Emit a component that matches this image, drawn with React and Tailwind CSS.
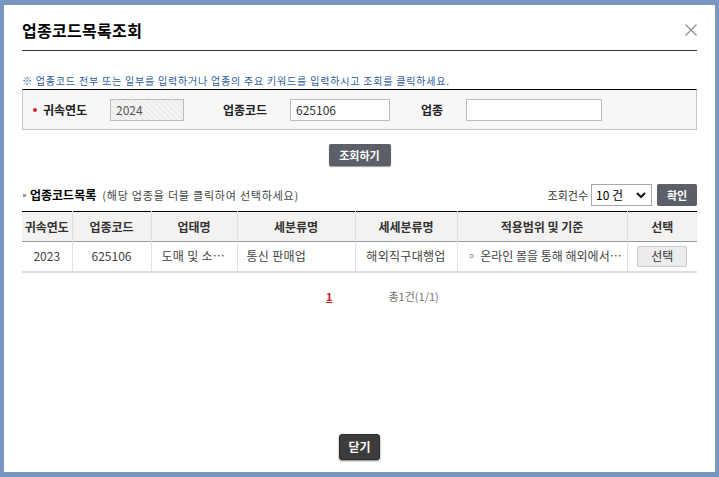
import React from 'react';

const font = { fontFamily: '"Noto Sans CJK KR", "Noto Sans", sans-serif' };

const columns = [
  { label: '귀속연도', w: 'w-[50px]' },
  { label: '업종코드', w: 'w-[79px]' },
  { label: '업태명', w: 'w-[86px]' },
  { label: '세분류명', w: 'w-[118px]' },
  { label: '세세분류명', w: 'w-[102px]' },
  { label: '적용범위 및 기준', w: 'w-[170px]' },
  { label: '선택', w: 'w-[70px]' },
];

export default function App() {
  return (
    <div className="min-h-[477px] w-[719px] bg-[#7896c0] pt-[5px] pl-[4px]" style={font}>
      <div className="w-[711px] h-[467px] bg-white flex flex-col px-[18px] text-[#333]">
        {/* HEADER */}
        <div className="h-[46px] flex items-center justify-between border-b border-[#333] shrink-0">
          <h1 className="text-[16px] font-bold text-black tracking-[0.3px] pt-[4px]">업종코드목록조회</h1>
          <svg width="12" height="12" viewBox="0 0 12 12" className="mt-[4px]">
            <path d="M0.5 0.5 L11.5 11.5 M11.5 0.5 L0.5 11.5" stroke="#8a8f9a" strokeWidth="1.2" fill="none" />
          </svg>
        </div>

        <p className="mt-[23px] text-[10px] leading-[13px] text-[#2b5ea0] tracking-[0.8px]">
          ※ 업종코드 전부 또는 일부를 입력하거나 업종의 주요 키워드를 입력하시고 조회를 클릭하세요.
        </p>

        {/* SEARCH BOX */}
        <div className="mt-[2px] h-[41px] border border-[#c6c6c6] border-t-black bg-[#f7f7f7] flex items-center pl-[10px] text-[12px]">
          <span className="w-[4px] h-[4px] rounded-full bg-[#d42a2a] mr-[6px]" />
          <span className="w-[67px] font-bold text-[#222]">귀속연도</span>
          <div className="w-[74px] h-[22px] border border-[#bcbcbc] flex items-center px-[5px] text-[#555] bg-[repeating-linear-gradient(45deg,#f4f4f4_0px,#f4f4f4_2px,#e6e6e6_3px,#f4f4f4_4px)]">2024</div>
          <span className="ml-[39px] w-[67px] font-bold text-[#222]">업종코드</span>
          <div className="w-[100px] h-[22px] border border-[#bcbcbc] bg-white flex items-center px-[5px] text-[#333]">625106</div>
          <span className="ml-[31px] w-[45px] font-bold text-[#222]">업종</span>
          <div className="w-[136px] h-[22px] border border-[#bcbcbc] bg-white" />
        </div>

        <div className="mt-[14px] flex justify-center">
          <button className="w-[62px] h-[22px] rounded-[2px] bg-[#5b5f67] text-white text-[11px] font-bold shadow-[0_1px_1px_rgba(0,0,0,0.4)]">조회하기</button>
        </div>

        {/* LIST HEADER */}
        <div className="mt-[18px] h-[22px] flex items-center justify-between">
          <div className="flex items-center text-[11px]">
            <span className="w-[3px] h-[3px] bg-[#999] ml-[1px] mr-[4px]" />
            <span className="font-bold text-[12px] text-black">업종코드목록</span>
            <span className="ml-[6px] text-[#444] tracking-[0.8px]">(해당 업종을 더블 클릭하여 선택하세요)</span>
          </div>
          <div className="flex items-center">
            <span className="text-[11px] mr-[3px]">조회건수</span>
            <div className="w-[61px] h-[22px] border border-[#a8a8a8] bg-white flex items-center justify-between pl-[4px] pr-[5px] text-[12px] text-black">
              <span>10 건</span>
              <svg width="10" height="7" viewBox="0 0 10 7">
                <path d="M1 1 L5 5 L9 1" stroke="#111" strokeWidth="2" fill="none" />
              </svg>
            </div>
            <button className="ml-[5px] w-[40px] h-[22px] rounded-[2px] bg-[#5b5f67] text-white text-[11px] font-bold">확인</button>
          </div>
        </div>

        {/* TABLE */}
        <table className="mt-[5px] w-[675px] table-fixed border-collapse border-t-[1.5px] border-t-black text-[12px]">
          <thead>
            <tr className="h-[30px] bg-[#f3f2f0] border-b border-[#9a9a9a]">
              {columns.map((c, i) => (
                <th key={c.label} className={`${c.w} font-bold text-[#333] text-center ${i > 0 ? 'border-l border-[#dedede]' : ''}`}>
                  {c.label}
                </th>
              ))}
            </tr>
          </thead>
          <tbody>
            <tr className="h-[30px] border-b-2 border-[#dedede] text-[#444]">
              <td className="text-center">2023</td>
              <td className="text-center border-l border-[#e4e4e4]">625106</td>
              <td className="border-l border-[#e4e4e4] pl-[10px] tracking-[0.3px]">도매 및 소…</td>
              <td className="border-l border-[#e4e4e4] pl-[9px] tracking-[0.3px]">통신 판매업</td>
              <td className="border-l border-[#e4e4e4] text-center tracking-[0.3px]">해외직구대행업</td>
              <td className="border-l border-[#e4e4e4] pl-[8px] whitespace-nowrap">◦ 온라인 몰을 통해 해외에서…</td>
              <td className="border-l border-[#e4e4e4] text-center">
                <button className="w-[50px] h-[21px] border border-[#c8c8c8] rounded-[2px] bg-[#ececec] text-[12px] text-[#333]">선택</button>
              </td>
            </tr>
          </tbody>
        </table>

        {/* PAGINATION */}
        <div className="mt-[15px] flex items-center text-[11px]">
          <span className="ml-[304px] font-bold text-[#c81e1e] underline">1</span>
          <span className="ml-[56px] text-[#777]">총1건(1/1)</span>
        </div>

        <div className="mt-auto pb-[12px] flex justify-center">
          <button className="w-[41px] h-[26px] rounded-[3px] bg-[#3c3c3c] border border-[#2a2a2a] text-white text-[12px] font-bold shadow-[0_1px_2px_rgba(0,0,0,0.5)]">닫기</button>
        </div>
      </div>
    </div>
  );
}
